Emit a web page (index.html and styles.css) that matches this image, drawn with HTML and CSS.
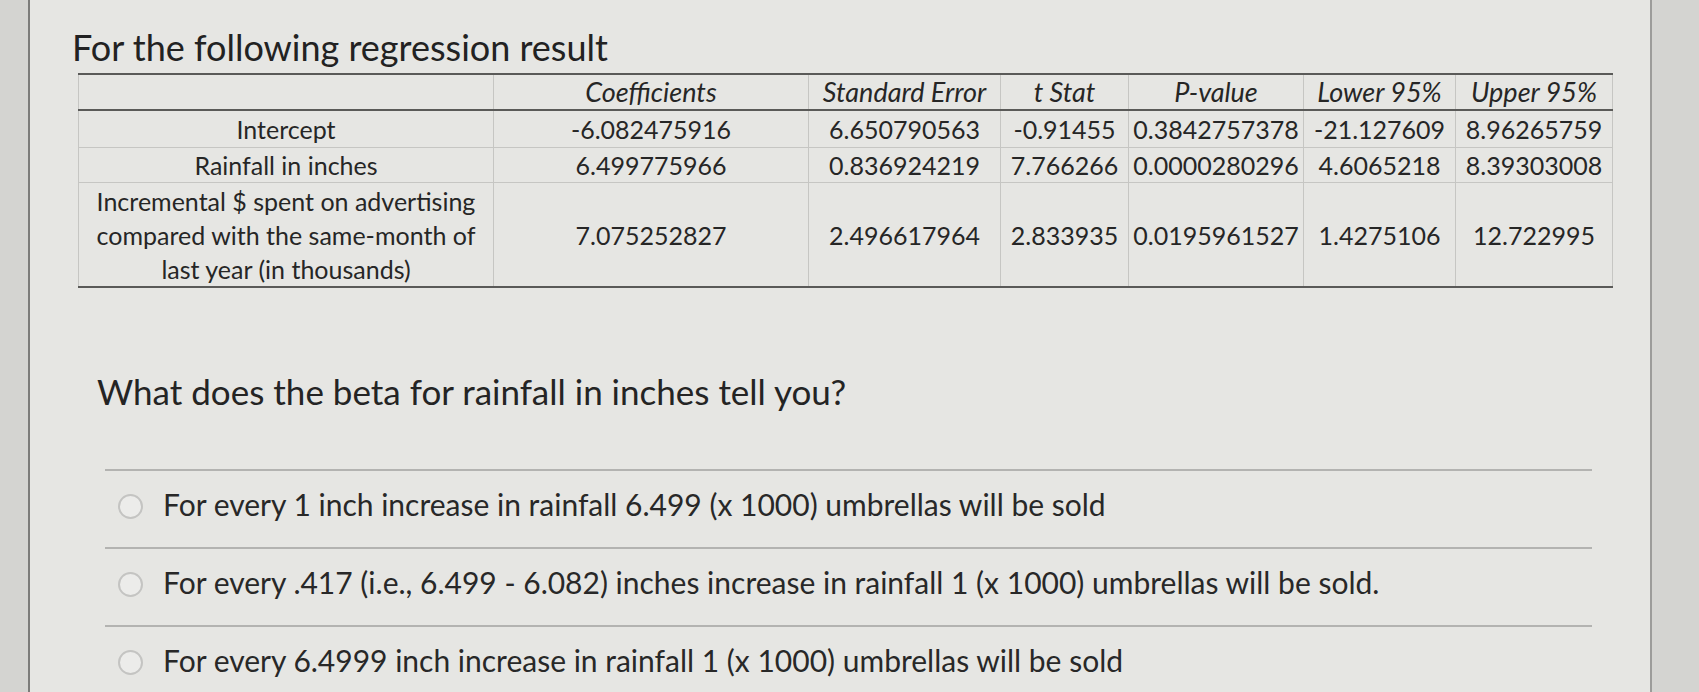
FILE: index.html
```html
<!DOCTYPE html>
<html lang="en">
<head>
<meta charset="utf-8">
<title>Regression question</title>
<link rel="stylesheet" href="styles.css">
</head>
<body>
<div class="screen">
  <div class="page">
    <h1 class="title">For the following regression result</h1>
    <table class="reg">
      <colgroup>
        <col class="c-label"><col class="c-coef"><col class="c-se"><col class="c-t"><col class="c-p"><col class="c-lo"><col class="c-hi">
      </colgroup>
      <thead>
        <tr class="head">
          <th></th><th>Coefficients</th><th>Standard Error</th><th>t Stat</th><th>P-value</th><th>Lower 95%</th><th>Upper 95%</th>
        </tr>
      </thead>
      <tbody>
        <tr class="r1">
          <td>Intercept</td><td>-6.082475916</td><td>6.650790563</td><td>-0.91455</td><td>0.3842757378</td><td>-21.127609</td><td>8.96265759</td>
        </tr>
        <tr class="r2">
          <td>Rainfall in inches</td><td>6.499775966</td><td>0.836924219</td><td>7.766266</td><td>0.0000280296</td><td>4.6065218</td><td>8.39303008</td>
        </tr>
        <tr class="r3">
          <td class="multi">Incremental $ spent on advertising compared with the same-month of last year (in thousands)</td><td>7.075252827</td><td>2.496617964</td><td>2.833935</td><td>0.0195961527</td><td>1.4275106</td><td>12.722995</td>
        </tr>
      </tbody>
    </table>

    <p class="question">What does the beta for rainfall in inches tell you?</p>

    <div class="answers">
      <label class="answer">
        <span class="radio"></span>
        <span class="answer-text">For every 1 inch increase in rainfall 6.499 (x 1000) umbrellas will be sold</span>
      </label>
      <label class="answer">
        <span class="radio"></span>
        <span class="answer-text">For every .417 (i.e., 6.499 - 6.082) inches increase in rainfall 1 (x 1000) umbrellas will be sold.</span>
      </label>
      <label class="answer">
        <span class="radio"></span>
        <span class="answer-text">For every 6.4999 inch increase in rainfall 1 (x 1000) umbrellas will be sold</span>
      </label>
    </div>
  </div>
</div>
</body>
</html>
```

FILE: styles.css
```css
html, body {
  margin: 0;
  padding: 0;
}

body {
  background: #d4d4d1;
  font-family: "Lato", "Noto Sans", sans-serif;
  color: #262626;
  overflow: hidden;
}

.screen {
  height: 692px;
  display: flex;
  padding-left: 28px;
}

.page {
  width: 1624px;
  height: 692px;
  background: #e6e6e3;
  border-left: 2px solid #7c7c7a;
  border-right: 2px solid #9c9c9a;
  padding-left: 42px;
  box-sizing: border-box;
  overflow: hidden;
}

.title {
  margin: 26px 0 0 0;
  font-size: 36px;
  line-height: 1.2;
  font-weight: 400;
  color: #222;
}

.reg {
  margin: 4px 0 0 6px;
  border-collapse: collapse;
  table-layout: fixed;
  width: 1534px;
  font-size: 25px;
  color: #262626;
}

.c-label { width: 415px; }
.c-coef { width: 315px; }
.c-se { width: 192px; }
.c-t { width: 128px; }
.c-p { width: 175px; }
.c-lo { width: 152px; }
.c-hi { width: 157px; }

.reg th,
.reg td {
  padding: 0;
  text-align: center;
  white-space: nowrap;
  line-height: 28px;
  border-left: 1px solid #c6c6c3;
  border-right: 1px solid #c6c6c3;
  border-bottom: 1px solid #c6c6c3;
}

.reg thead tr {
  border-top: 2px solid #5a5a58;
}

.reg th {
  font-weight: 400;
  font-style: italic;
  font-size: 27px;
  line-height: 30px;
  height: 32px;
  vertical-align: bottom;
  padding-bottom: 2px;
  border-bottom: 2px solid #5a5a58;
}

.reg .r1 td { height: 36px; }
.reg .r2 td { height: 34px; }
.reg .r3 td {
  height: 103px;
  border-bottom: 2px solid #5a5a58;
}

.reg td.multi {
  white-space: normal;
  line-height: 34px;
  padding: 0 6px;
}

.question {
  margin: 82px 0 0 25px;
  font-size: 35px;
  line-height: 1.2;
  color: #242424;
}

.answers {
  margin: 57px 0 0 33px;
  width: 1487px;
  display: flex;
  flex-direction: column;
}

.answer {
  display: flex;
  align-items: flex-start;
  gap: 20px;
  height: 78px;
  box-sizing: border-box;
  padding: 16px 0 0 13px;
  border-top: 2px solid #b3b3b1;
}

.radio {
  flex: none;
  width: 25px;
  height: 25px;
  margin-top: 7px;
  box-sizing: border-box;
  border: 2px solid #c4c4c2;
  border-radius: 50%;
  background: #ececea;
}

.answer-text {
  font-size: 30px;
  line-height: 34px;
  color: #282828;
}
```
